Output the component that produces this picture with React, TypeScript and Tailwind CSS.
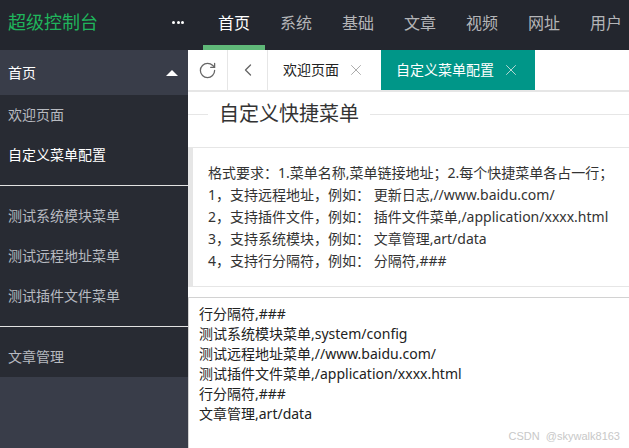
import { RotateCw, ChevronLeft, X } from 'lucide-react';

const navItems = ['首页', '系统', '基础', '文章', '视频', '网址', '用户'];

const quoteLines = [
  '格式要求：1.菜单名称,菜单链接地址；2.每个快捷菜单各占一行；',
  '1，支持远程地址，例如： 更新日志,//www.baidu.com/',
  '2，支持插件文件，例如： 插件文件菜单,/application/xxxx.html',
  '3，支持系统模块，例如： 文章管理,art/data',
  '4，支持行分隔符，例如： 分隔符,###',
];

const menuLines = [
  '行分隔符,###',
  '测试系统模块菜单,system/config',
  '测试远程地址菜单,//www.baidu.com/',
  '测试插件文件菜单,/application/xxxx.html',
  '行分隔符,###',
  '文章管理,art/data',
];

const SideItem = ({ label, active }: { label: string; active?: boolean }) => (
  <div className={`h-[40px] flex items-center pl-2 text-sm ${active ? 'text-white' : 'text-[#b7bac0]'}`}>
    {label}
  </div>
);

const Divider = () => <div className="my-[10px] h-px bg-[#e2e2e2]" />;

const App = () => {
  return (
    <div
      className="w-[629px] h-[448px] overflow-hidden flex flex-col relative"
      style={{ fontFamily: '"Noto Sans", "Noto Sans CJK SC", sans-serif' }}
    >
      {/* top header */}
      <div className="h-[50px] bg-[#23262e] flex shrink-0">
        <div className="w-[166px] shrink-0 pl-2 pb-[5px] flex items-center text-[18px] text-[#1fb55c]">超级控制台</div>
        <div className="w-[24px] shrink-0 pb-[5px] flex items-center justify-center gap-[1.5px]">
          <span className="w-[3px] h-[3px] rounded-full bg-white" />
          <span className="w-[3px] h-[3px] rounded-full bg-white" />
          <span className="w-[3px] h-[3px] rounded-full bg-white" />
        </div>
        <div className="ml-[13px] flex shrink-0">
          {navItems.map((n, i) => (
            <div
              key={n}
              className={`w-[62px] shrink-0 flex items-center justify-center text-base border-b-[5px] ${
                i === 0 ? 'text-white border-[#5fb878]' : 'text-[#b4b5b8] border-transparent'
              }`}
            >
              {n}
            </div>
          ))}
        </div>
      </div>

      <div className="flex flex-1 min-h-0">
        {/* sidebar */}
        <div className="w-[188px] shrink-0 bg-[#393d49] flex flex-col">
          <div className="h-[45px] flex items-center justify-between pl-2 pr-[10px] text-sm text-white">
            <span>首页</span>
            <span className="w-0 h-0 border-x-[6px] border-x-transparent border-b-[6px] border-b-white" />
          </div>
          <div className="bg-[#282b33]">
            <SideItem label="欢迎页面" />
            <SideItem label="自定义菜单配置" active />
            <Divider />
            <SideItem label="测试系统模块菜单" />
            <SideItem label="测试远程地址菜单" />
            <SideItem label="测试插件文件菜单" />
            <Divider />
            <SideItem label="文章管理" />
          </div>
        </div>

        {/* main */}
        <div className="flex-1 min-w-0 bg-white flex flex-col text-[#333]">
          <div className="h-[42px] shrink-0 flex border-b-2 border-[#e6e6e6]">
            <div className="w-[40px] flex items-center justify-center border-r border-[#e6e6e6] text-[#666]">
              <RotateCw size={19} strokeWidth={1.6} />
            </div>
            <div className="w-[40px] flex items-center justify-center border-r border-[#e6e6e6] text-[#666]">
              <ChevronLeft size={20} strokeWidth={1.6} />
            </div>
            <div className="flex items-center pl-[15px] pr-[16px] gap-[8px] text-sm text-[#222]">
              <span>欢迎页面</span>
              <X size={18} strokeWidth={1.3} className="text-[#aaa]" />
            </div>
            <div className="flex items-center pl-[15px] pr-[15px] gap-[8px] text-sm text-white bg-[#009688]">
              <span>自定义菜单配置</span>
              <X size={18} strokeWidth={1.3} className="text-[#b8d8d4]" />
            </div>
          </div>

          <div className="mt-[8px] h-[28px] flex items-center">
            <div className="w-[20px] h-px bg-[#e6e6e6]" />
            <span className="px-[11px] text-[20px] leading-[28px] text-[#333]">自定义快捷菜单</span>
            <div className="flex-1 h-px bg-[#e6e6e6]" />
          </div>

          <div className="mt-[19px] border border-[#e6e6e6] border-l-[5px] border-r-0 pl-[15px] py-[14px] text-sm leading-[22px] whitespace-nowrap">
            {quoteLines.map((l, i) => (
              <div key={i}>{l}</div>
            ))}
          </div>

          <div className="mt-[10px] flex-1 border border-[#d2d2d2] border-r-0 border-b-0 pl-[10px] pt-[6px] text-sm leading-[20px] whitespace-nowrap text-[#222]">
            {menuLines.map((l, i) => (
              <div key={i}>{l}</div>
            ))}
          </div>
        </div>
      </div>

      <div
        className="absolute right-[9px] bottom-[4px] text-[11px] text-[#c8c8c8] whitespace-pre"
        style={{ fontFamily: '"Liberation Sans", sans-serif' }}
      >
        CSDN  @skywalk8163
      </div>
    </div>
  );
};

export default App;
